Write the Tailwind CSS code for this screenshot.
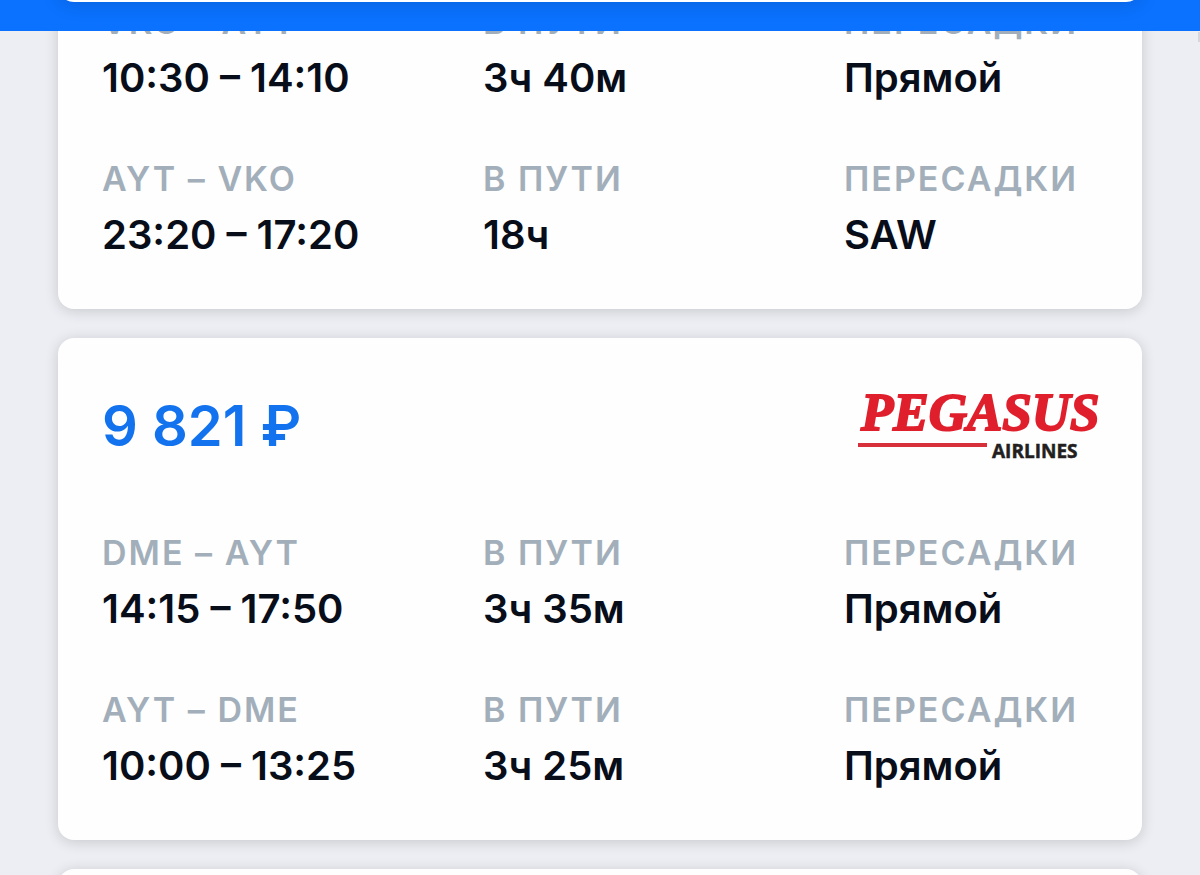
<!DOCTYPE html>
<html lang="ru">
<head>
    <meta charset="UTF-8">
    <meta name="viewport" content="width=device-width, initial-scale=1.0">
    <title>Авиабилеты</title>
    <script src="https://cdn.jsdelivr.net/npm/@tailwindcss/browser@4"></script>
</head>
<body class="bg-[#edeef3] font-['Inter',sans-serif] text-[#080d1a]">
    <div class="relative h-screen overflow-hidden">
        <!-- Header -->
        <header class="relative z-10 h-[31px] bg-[#0a72ff] px-[58px] overflow-hidden">
            <div class="h-10 -mt-[38px] bg-white rounded-b-2xl shadow-[0_2px_20px_rgba(0,0,0,0.14)]"></div>
        </header>
        <div class="absolute top-8 right-0 w-[2px] h-[10px] bg-[#d5d7dc]"></div>

        <!-- Tickets -->
        <main class="-mt-[37px] px-[58px] flex flex-col gap-[29px]">
            <article class="bg-[#fefefe] rounded-2xl shadow-[0_2px_14px_rgba(0,0,0,0.16)] px-[44px] pb-[46px] flex flex-col gap-[45px]">
                <dl class="grid grid-cols-[381fr_361fr_254fr]">
                    <div>
                        <dt class="text-[34px] leading-[56px] font-semibold tracking-[2px] text-[#a2afba]">VKO – AYT</dt>
                        <dd class="text-[40px] leading-[56px] font-semibold">10:30 – 14:10</dd>
                    </div>
                    <div>
                        <dt class="text-[34px] leading-[56px] font-semibold tracking-[2px] text-[#a2afba]">В ПУТИ</dt>
                        <dd class="text-[40px] leading-[56px] font-semibold">3ч 40м</dd>
                    </div>
                    <div>
                        <dt class="text-[34px] leading-[56px] font-semibold tracking-[2px] text-[#a2afba]">ПЕРЕСАДКИ</dt>
                        <dd class="text-[40px] leading-[56px] font-semibold">Прямой</dd>
                    </div>
                </dl>
                <dl class="grid grid-cols-[381fr_361fr_254fr]">
                    <div>
                        <dt class="text-[34px] leading-[56px] font-semibold tracking-[2px] text-[#a2afba]">AYT – VKO</dt>
                        <dd class="text-[40px] leading-[56px] font-semibold">23:20 – 17:20</dd>
                    </div>
                    <div>
                        <dt class="text-[34px] leading-[56px] font-semibold tracking-[2px] text-[#a2afba]">В ПУТИ</dt>
                        <dd class="text-[40px] leading-[56px] font-semibold">18ч</dd>
                    </div>
                    <div>
                        <dt class="text-[34px] leading-[56px] font-semibold tracking-[2px] text-[#a2afba]">ПЕРЕСАДКИ</dt>
                        <dd class="text-[40px] leading-[56px] font-semibold">SAW</dd>
                    </div>
                </dl>
            </article>

            <article class="bg-[#fefefe] rounded-2xl shadow-[0_2px_14px_rgba(0,0,0,0.16)] px-[44px] pt-[44px] pb-[46px] flex flex-col gap-[45px]">
                <div class="flex items-center justify-between h-[88px] mb-[10px]">
                    <h2 class="text-[56px] leading-[88px] font-semibold text-[#1373ee]">9 821 ₽</h2>
                    <svg class="w-[240px] h-[72px] overflow-visible" viewBox="0 0 240 72" role="img" aria-label="Pegasus Airlines">
                        <text x="3" y="40" font-family="Liberation Serif, serif" font-size="53" font-weight="700" font-style="italic" fill="#e01f2d" stroke="#e01f2d" stroke-width="2">PEGASUS</text>
                        <rect x="0" y="53" width="129" height="4" fill="#d8303a" />
                        <text x="134" y="68" font-family="Open Sans, sans-serif" font-size="19" font-weight="700" fill="#231f20" stroke="#231f20" stroke-width="0.5">AIRLINES</text>
                    </svg>
                </div>
                <dl class="grid grid-cols-[381fr_361fr_254fr]">
                    <div>
                        <dt class="text-[34px] leading-[56px] font-semibold tracking-[2px] text-[#a2afba]">DME – AYT</dt>
                        <dd class="text-[40px] leading-[56px] font-semibold">14:15 – 17:50</dd>
                    </div>
                    <div>
                        <dt class="text-[34px] leading-[56px] font-semibold tracking-[2px] text-[#a2afba]">В ПУТИ</dt>
                        <dd class="text-[40px] leading-[56px] font-semibold">3ч 35м</dd>
                    </div>
                    <div>
                        <dt class="text-[34px] leading-[56px] font-semibold tracking-[2px] text-[#a2afba]">ПЕРЕСАДКИ</dt>
                        <dd class="text-[40px] leading-[56px] font-semibold">Прямой</dd>
                    </div>
                </dl>
                <dl class="grid grid-cols-[381fr_361fr_254fr]">
                    <div>
                        <dt class="text-[34px] leading-[56px] font-semibold tracking-[2px] text-[#a2afba]">AYT – DME</dt>
                        <dd class="text-[40px] leading-[56px] font-semibold">10:00 – 13:25</dd>
                    </div>
                    <div>
                        <dt class="text-[34px] leading-[56px] font-semibold tracking-[2px] text-[#a2afba]">В ПУТИ</dt>
                        <dd class="text-[40px] leading-[56px] font-semibold">3ч 25м</dd>
                    </div>
                    <div>
                        <dt class="text-[34px] leading-[56px] font-semibold tracking-[2px] text-[#a2afba]">ПЕРЕСАДКИ</dt>
                        <dd class="text-[40px] leading-[56px] font-semibold">Прямой</dd>
                    </div>
                </dl>
            </article>

            <article class="h-24 bg-[#fefefe] rounded-2xl shadow-[0_2px_14px_rgba(0,0,0,0.16)]"></article>
        </main>
    </div>
</body>
</html>
